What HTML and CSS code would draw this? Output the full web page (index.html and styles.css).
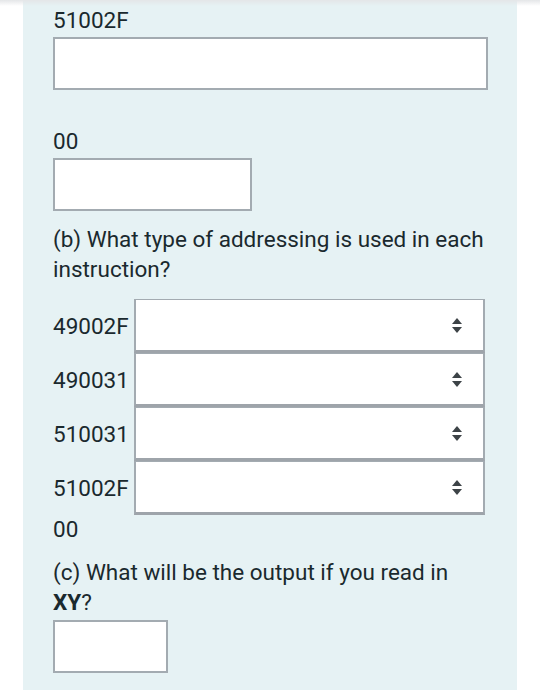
FILE: index.html
```html
<!DOCTYPE html>
<html>
<head>
<meta charset="utf-8">
<link rel="stylesheet" href="styles.css">
</head>
<body>
<div class="topshadow"></div>
<div class="panel">
  <div class="label">51002F</div>
  <div class="input wide"></div>
  <div class="label gap">00</div>
  <div class="input mid"></div>
  <p class="question">(b) What type of addressing is used in each instruction?</p>
  <div class="selects">
    <div class="row"><span class="rlabel">49002F</span><div class="select"><span class="arrows"></span></div></div>
    <div class="row"><span class="rlabel">490031</span><div class="select"><span class="arrows"></span></div></div>
    <div class="row"><span class="rlabel">510031</span><div class="select"><span class="arrows"></span></div></div>
    <div class="row"><span class="rlabel">51002F</span><div class="select"><span class="arrows"></span></div></div>
  </div>
  <div class="label after">00</div>
  <p class="question q2">(c) What will be the output if you read in <b>XY</b>?</p>
  <div class="input small"></div>
</div>
</body>
</html>
```
FILE: styles.css
```css
html, body {
  margin: 0;
  padding: 0;
  background: #ffffff;
  height: 690px;
  overflow: hidden;
}
body {
  font-family: Roboto, "Noto Sans", sans-serif;
  color: #1a292e;
  position: relative;
}
.topshadow {
  position: absolute;
  left: 0;
  right: 0;
  top: 0;
  height: 6px;
  background: linear-gradient(#e4e6e8, rgba(255,255,255,0));
  z-index: 2;
}
.panel {
  margin: 0 23px;
  background: #e6f2f4;
  padding: 6px 30px 0 30px;
  height: 690px;
  box-sizing: border-box;
}
.label {
  font-size: 22.5px;
  line-height: 28px;
  height: 28px;
}
.label.gap {
  margin-top: 37px;
}
.input {
  background: #fff;
  border: 2px solid #a3abb1;
  box-sizing: border-box;
  height: 53px;
  margin-top: 3px;
}
.input.wide { width: 435px; }
.input.mid { width: 199px; }
.input.small { width: 115px; margin-top: 3px; }
.question {
  font-size: 22.5px;
  line-height: 30px;
  margin: 13px 0 0 0;
}
.selects {
  margin-top: 15px;
  display: flex;
  flex-direction: column;
}
.row {
  display: flex;
  align-items: center;
  height: 54px;
}
.rlabel {
  font-size: 22.5px;
  width: 81px;
  flex: none;
}
.select {
  flex: none;
  width: 351px;
  height: 54px;
  box-sizing: border-box;
  background: #fff;
  border: 2px solid #a3abb1;
  border-top-width: 1px;
  border-bottom: 3px solid #9ea4aa;
  display: flex;
  align-items: center;
  justify-content: flex-end;
  padding-right: 20px;
}
.arrows {
  width: 11px;
  height: 15px;
  position: relative;
  display: block;
}
.arrows::before, .arrows::after {
  content: "";
  position: absolute;
  left: 0;
  border-left: 5.5px solid transparent;
  border-right: 5.5px solid transparent;
}
.arrows::before {
  top: 0;
  border-bottom: 6px solid #3d4347;
}
.arrows::after {
  bottom: 0;
  border-top: 6px solid #3d4347;
}
.label.after {
  margin-top: 0;
}
.q2 {
  margin-top: 14px;
}
.q2 b {
  font-weight: 700;
}
```
